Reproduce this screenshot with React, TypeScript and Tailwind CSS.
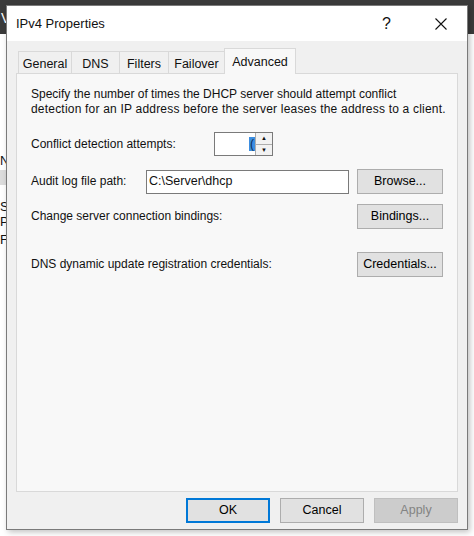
import React from "react";

const tabs = [
  { name: "General", w: "w-[54px]" },
  { name: "DNS", w: "w-[49px]" },
  { name: "Filters", w: "w-[50px]" },
  { name: "Failover", w: "w-[57px]" },
  { name: "Advanced", w: "w-[72px]" },
];

const WinButton = ({
  label,
  className = "",
}: {
  label: string;
  className?: string;
}) => (
  <button
    className={`h-[25px] w-[86px] border border-[#adadad] bg-[#e1e1e1] text-[12.5px] text-black ${className}`}
  >
    {label}
  </button>
);

const SettingRow = ({
  label,
  action,
  className = "",
}: {
  label: string;
  action: string;
  className?: string;
}) => (
  <div className={`flex items-center justify-between ${className}`}>
    <span>{label}</span>
    <WinButton label={action} />
  </div>
);

const App = () => {
  const [active] = React.useState("Advanced");

  return (
    <div className="relative w-[474px] h-[536px] overflow-hidden bg-white font-['Liberation_Sans',Arial,sans-serif] text-[12px] text-[#111]">
      {/* window behind the dialog */}
      <div className="h-[34px] bg-[#3b3b3b] pl-[1px] pt-[10px] text-[14px] leading-[16px] text-white">V</div>
      <div className="flex flex-col pt-[120px] text-[13px] leading-[14px] whitespace-nowrap">
        <span>N</span>
        <span className="mt-[2px] h-[15px] w-[6px] bg-[#dcdcdc]" />
        <span className="mt-[15px]">Se</span>
        <span className="mt-[1px]">P</span>
        <span className="mt-[4px]">Fi</span>
      </div>

      {/* dialog window */}
      <div className="absolute left-[6px] top-[5px] flex h-[525px] w-[462px] flex-col border border-[#7a7a7a] shadow-[2px_2px_6px_rgba(0,0,0,0.25)]">
        <div className="flex h-[35px] items-center bg-white pl-[9px]">
          <span className="text-[13px]">IPv4 Properties</span>
          <span className="ml-auto mr-[44px] text-[16px]">?</span>
          <svg width="12" height="12" viewBox="0 0 12 12" className="mr-[20px]">
            <path d="M0.5 0.5 L11.5 11.5 M11.5 0.5 L0.5 11.5" stroke="#111" strokeWidth="1.1" />
          </svg>
        </div>

        <div className="flex flex-1 flex-col bg-[#f0f0f0] px-[9px] pt-[7px]">
          {/* tab strip */}
          <div className="flex h-[25px] items-end pl-[2px] whitespace-nowrap text-[12.5px]">
            {tabs.map((t) =>
              t.name === active ? (
                <div
                  key={t.name}
                  className={`relative -mb-px h-[26px] border border-b-0 border-[#d9d9d9] bg-[#f8f8f8] pt-[4px] text-center ${t.w}`}
                >
                  {t.name}
                </div>
              ) : (
                <div
                  key={t.name}
                  className={`-mr-px h-[22px] border border-b-0 border-[#d9d9d9] bg-[#f0f0f0] pt-[4px] text-center leading-[16px] ${t.w}`}
                >
                  {t.name}
                </div>
              )
            )}
          </div>

          {/* tab page */}
          <div className="h-[419px] border border-[#d9d9d9] bg-[#f8f8f8] pl-[14px] pr-[14px] pt-[13px] leading-[15px] whitespace-nowrap">
            <p>
              Specify the number of times the DHCP server should attempt conflict
              <br />
              <span className="tracking-[0.2px]">
                detection for an IP address before the server leases the address to a client.
              </span>
            </p>

            <div className="mt-[15px] flex items-center">
              <span className="w-[183px]">Conflict detection attempts:</span>
              <div className="flex h-[24px] items-stretch border border-[#7a7a7a] bg-white">
                <div className="flex w-[40px] items-center justify-end">
                  <span className="bg-[#3d8ee0] px-[1px] text-[12px] leading-[14px] text-[#0b2d55]">(</span>
                </div>
                <div className="flex w-[17px] flex-col border-l border-[#adadad]">
                  <div className="flex flex-1 items-center justify-center border-b border-[#adadad] bg-[#f2f2f2] text-[6px] leading-none">
                    ▲
                  </div>
                  <div className="flex flex-1 items-center justify-center bg-[#f2f2f2] text-[6px] leading-none">
                    ▼
                  </div>
                </div>
              </div>
            </div>

            <div className="mt-[13px] flex items-center">
              <span className="w-[115px]">Audit log file path:</span>
              <div className="h-[24px] w-[203px] border border-[#7a7a7a] bg-white pl-[2px] pt-[3px] text-[12.5px]">
                C:\Server\dhcp
              </div>
              <WinButton label="Browse..." className="ml-auto" />
            </div>

            <SettingRow
              label="Change server connection bindings:"
              action="Bindings..."
              className="mt-[10px]"
            />
            <SettingRow
              label="DNS dynamic update registration credentials:"
              action="Credentials..."
              className="mt-[23px]"
            />
          </div>

          {/* dialog buttons */}
          <div className="mt-[6px] flex justify-end gap-[10px]">
            <WinButton label="OK" className="!w-[84px] !border-[#0078d7] border-2" />
            <WinButton label="Cancel" className="!w-[84px]" />
            <button className="h-[25px] w-[84px] border border-[#bfbfbf] bg-[#cccccc] text-[12.5px] text-[#838383]">
              Apply
            </button>
          </div>
        </div>
      </div>
    </div>
  );
};

export default App;
